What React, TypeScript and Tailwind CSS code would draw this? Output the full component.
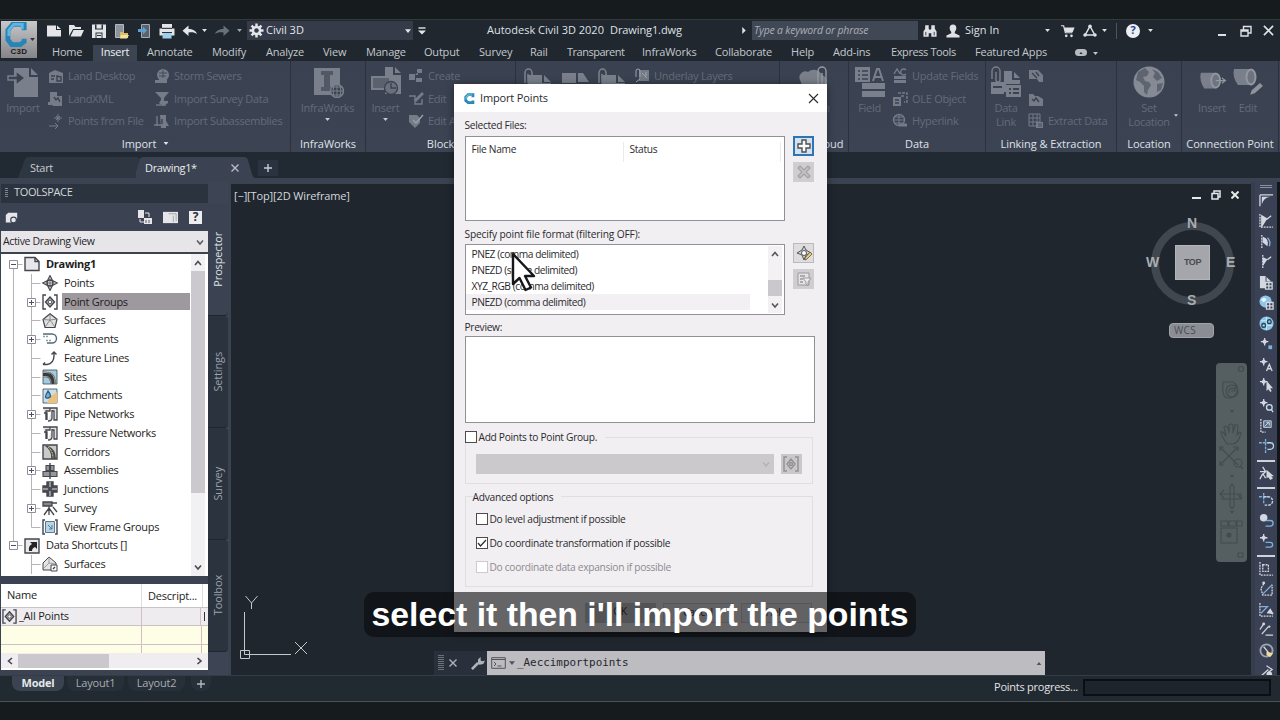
import React from 'react';
import type { ReactNode } from 'react';

type IconProps = { className?: string; children?: ReactNode; box?: string };

function Icon({ className = '', children, box = '0 0 16 16' }: IconProps) {
  return (
    <svg viewBox={box} className={`block shrink-0 ${className}`} fill="none" stroke="currentColor" strokeWidth={1.4}>
      {children}
    </svg>
  );
}

function Caret({ className = '' }: { className?: string }) {
  return (
    <svg viewBox="0 0 8 5" className={`block shrink-0 fill-current ${className}`}>
      <path d="M0 0h8L4 5z" />
    </svg>
  );
}

/* ---------- title bar ---------- */

function QuickAccess() {
  return (
    <div className="flex h-5 items-center text-[#e3e5e8]">
      <Icon className="ml-[9px] h-4 w-4">
        <path d="M1 2.500h9v4.500h5v6.500H1zM11 2.500l4 3.500h-4z" fill="currentColor" stroke="none" />
      </Icon>
      <Icon className="ml-1.5 h-4 w-4">
        <path d="M1 13V2h5l1.500 2H13v2H5z" fill="currentColor" stroke="none" />
        <path d="M5.500 7H16l-3 6.500H2.500z" fill="currentColor" stroke="none" />
      </Icon>
      <Icon className="ml-[7px] h-4 w-4">
        <path d="M1 1.500h14v13.500H1z" fill="currentColor" stroke="none" />
        <path d="M4 1.500h8v5H4zM4.500 9.500h7v5.500h-7z" fill="#2a313a" stroke="none" />
        <path d="M5.500 1.500h5v4h-5zM5.500 10.500h5v4.500h-5z" fill="currentColor" stroke="none" />
        <path d="M6 12.500h4" stroke="#2a313a" strokeWidth="1" />
      </Icon>
      <Icon className="ml-1.5 h-4 w-4">
        <path d="M2.500 1.500h8v13h-8z" fill="#8d939b" stroke="#b5b9be" strokeWidth="1" />
        <path d="M7 9h3l1 1h4v5H7z" fill="#d9bd62" stroke="none" />
        <path d="M8 12h8l-2 3.500H7z" fill="#f4e3a0" stroke="none" />
      </Icon>
      <Icon className="ml-2 h-4 w-4">
        <path d="M4.500 1.500h8v13h-8z" fill="#5a626d" stroke="#a6abb2" strokeWidth="1" />
        <path d="M1 6h5V3.500L10 7.500 6 11.500V9H1z" fill="#5d9fd0" stroke="none" />
      </Icon>
      <Icon className="ml-1.5 h-4 w-4">
        <path d="M3 1h10v4H3zM0.500 5.500h15v7h-15z" fill="currentColor" stroke="none" />
        <path d="M3 5.300h10M3 9.500h10" stroke="#2a313a" strokeWidth="1" />
        <path d="M3.500 10h9v5.500h-9z" fill="#9ed0ee" stroke="none" />
      </Icon>
      <Icon className="ml-[7px] h-4 w-4">
        <path d="M6.500 2.500v3.500c4 0 7.500 1.500 8.500 5-2.500-1.800-5-2-8.500-1.500V13L0.500 7.700z" fill="currentColor" stroke="none" />
      </Icon>
      <Caret className="ml-1 h-[3px] w-[5px]" />
      <Icon className="ml-[7px] h-4 w-4 text-[#68707b]">
        <path d="M9.500 2.500v3.500C5.500 6 2 7.500 1 11c2.500-1.800 5-2 8.500-1.500V13l6-5.300z" fill="currentColor" stroke="none" />
      </Icon>
      <Caret className="ml-[7px] h-[3px] w-[5px] text-[#a0a5ad]" />
      <div className="ml-[5px] flex h-[19px] w-[166px] items-center bg-[#353b49] pl-0.5">
        <Icon className="h-[15px] w-[15px]">
          <path
            d="M8 .5v15M.5 8h15M2.700 2.700l10.600 10.600M13.300 2.700L2.700 13.300"
            strokeWidth="2.600"
          />
          <circle cx="8" cy="8" r="5.200" fill="currentColor" stroke="none" />
          <circle cx="8" cy="8" r="2.400" fill="#353b49" stroke="none" />
        </Icon>
        <span className="ml-0.5 text-[11px]">Civil 3D</span>
        <Caret className="mr-[2px] ml-auto h-1 w-1.5" />
      </div>
      <Icon className="ml-[5px] h-2 w-2" box="0 0 8 8">
        <path d="M0.500 1h7" />
        <path d="M0 3.500h8L4 7.500z" fill="currentColor" stroke="none" />
      </Icon>
    </div>
  );
}

function TitleBar() {
  return (
    <div className="flex h-[21px] items-center text-[#dfe1e5]">
      <div className="w-[450px]">
        <QuickAccess />
      </div>
      <span className="w-[123px] text-[11px] whitespace-nowrap">Autodesk Civil 3D 2020</span>
      <span className="w-[132px] text-[11px] tracking-[-0.100px] whitespace-nowrap">Drawing1.dwg</span>
      <svg viewBox="0 0 4 8" className="h-[7px] w-1 fill-current">
        <path d="M0 0l4 4-4 4z" />
      </svg>
      <div className="ml-1.5 flex h-[19px] w-[166px] items-center bg-[#414855] pl-0.5 text-[10.500px] tracking-[-0.200px] text-[#a9adb5] italic">
        Type a keyword or phrase
      </div>
      <Icon className="ml-[5px] h-[14px] w-[14px]">
        <path d="M2.500 1.500h4v4l1 1h1l1-1v-4h4v4l2 3v6h-6v-4h-3v4H.5v-6l2-3z" fill="currentColor" stroke="none" />
        <path d="M3.200 9v4M12.800 9v4" stroke="#2a313a" strokeWidth="1" />
      </Icon>
      <Icon className="ml-[9px] h-[14px] w-[14px]">
        <path d="M8 .5c2.500 0 3.800 1.500 3.800 4C11.800 7 10.500 8 10 9v1.500l5.500 2.500v2.500H.5V13L6 10.500V9C5.500 8 4.200 7 4.200 4.500c0-2.500 1.300-4 3.800-4z" fill="currentColor" stroke="none" />
      </Icon>
      <span className="ml-[5px] w-[80px] text-[11px]">Sign In</span>
      <Caret className="h-[3px] w-[5px]" />
      <Icon className="ml-[11px] h-[14px] w-[14px]">
        <path d="M0 2h3l2 8h8" />
        <path d="M4 4h11.500l-2 5H5z" fill="currentColor" stroke="none" />
        <circle cx="6" cy="13.500" r="1.500" fill="currentColor" stroke="none" />
        <circle cx="12" cy="13.500" r="1.500" fill="currentColor" stroke="none" />
      </Icon>
      <Icon className="ml-[8px] h-[14px] w-[14px]">
        <path d="M8 2.500L2.500 12.500h11z" strokeWidth="1.700" />
        <circle cx="8" cy="2.500" r="2" fill="currentColor" stroke="none" />
        <circle cx="2.300" cy="12.500" r="2" fill="currentColor" stroke="none" />
        <circle cx="13.700" cy="12.500" r="2" fill="currentColor" stroke="none" />
      </Icon>
      <Caret className="ml-[5px] h-[3px] w-[5px]" />
      <div className="ml-[9px] h-4 w-px bg-[#4d545f]" />
      <div className="ml-[9px] flex h-[14px] w-[14px] items-center justify-center rounded-full bg-[#eceef3] text-[11px] font-bold text-[#27408b]">
        ?
      </div>
      <Caret className="ml-2 h-[3px] w-[5px]" />
      <div className="mt-[9px] ml-[65px] h-[2px] w-[8px] bg-current" />
      <Icon className="ml-[14px] h-3 w-3" box="0 0 12 12">
        <path d="M1 5h7v6H1zM1 6h7M3.500 5V1.500H11V8H8" />
      </Icon>
      <Icon className="ml-[11px] h-[11px] w-[11px]" box="0 0 12 12">
        <path d="M1 1l10 10M11 1L1 11" strokeWidth="1.800" />
      </Icon>
    </div>
  );
}

const ribbonTabs: [string, string][] = [
  ['Home', 'w-[41px]'],
  ['Insert', 'w-[54px]'],
  ['Annotate', 'w-[65px]'],
  ['Modify', 'w-[54px]'],
  ['Analyze', 'w-[57px]'],
  ['View', 'w-[43px]'],
  ['Manage', 'w-[58px]'],
  ['Output', 'w-[55px]'],
  ['Survey', 'w-[51px]'],
  ['Rail', 'w-[37px]'],
  ['Transparent', 'w-[75px] tracking-[-0.500px]'],
  ['InfraWorks', 'w-[73px]'],
  ['Collaborate', 'w-[76px]'],
  ['Help', 'w-[42px]'],
  ['Add-ins', 'w-[58px]'],
  ['Express Tools', 'w-[84px] tracking-[-0.400px]'],
  ['Featured Apps', 'w-[100px]'],
];

function RibbonTabs() {
  return (
    <div className="flex h-[21px] pl-[15px] text-[11px] tracking-[-0.200px] whitespace-nowrap text-[#c3c7cd]">
      {ribbonTabs.map(([label, width]) =>
        label === 'Insert' ? (
          <div key={label} className={`flex items-center ${width}`}>
            <span className="mt-[4px] flex h-[17px] w-[44px] items-center justify-center bg-[#3c4452] pb-[2px] text-[#eef0f3]">
              Insert
            </span>
          </div>
        ) : (
          <span key={label} className={`flex items-center pt-0.5 ${width}`}>
            {label}
          </span>
        ),
      )}
      <span className="mt-[8px] flex h-[7px] w-[12px] items-center justify-center rounded-sm bg-[#b7bac0]">
        <Caret className="h-[2px] w-1 rotate-180 text-[#252c35]" />
      </span>
      <Caret className="mt-[11px] ml-[6px] h-[3px] w-[5px]" />
    </div>
  );
}

function AppButton() {
  return (
    <div className="mt-px ml-px flex h-[37px] w-[36px] shrink-0 flex-col items-center bg-gradient-to-b from-[#c9c8cb] to-[#858488]">
      <div className="flex w-full items-center justify-between">
        <svg viewBox="0 0 24 26" className="ml-[4px] h-[26px] w-[23px]" fill="none">
          <path d="M20 9V3H8L3 9v10l4 5h9l4-3v-3" stroke="#2585b8" strokeWidth="5" />
          <path d="M18 8V3H9L4 9v6" stroke="#62b5dc" strokeWidth="3" />
        </svg>
        <Caret className="mt-2.5 mr-[2px] h-[3px] w-[5px] text-[#333]" />
      </div>
      <span className="font-['Liberation_Sans',sans-serif] text-[8px] leading-[9px] font-bold tracking-[0.300px] text-[#191919]">C3D</span>
    </div>
  );
}

/* ---------- ribbon ---------- */

function Panel({ width, title, children, arrow }: { width: string; title: string; children?: ReactNode; arrow?: boolean }) {
  return (
    <section className={`flex h-full shrink-0 flex-col border-r border-[#2b323e] ${width}`}>
      <div className="flex h-[74px] pt-1 text-[#646b78]">{children}</div>
      <div className="flex items-center justify-center gap-[7px] text-[11px] leading-[17px] tracking-[-0.050px] whitespace-nowrap text-[#dfe2e7]">
        {title}
        {arrow && <Caret className="h-[3px] w-1.5" />}
      </div>
    </section>
  );
}

function Small({ icon, label }: { icon: ReactNode; label: string }) {
  return (
    <div className="flex h-[22.500px] items-center gap-1 text-[11px] tracking-[-0.280px] whitespace-nowrap">
      <Icon className="h-4 w-4 text-[#757b87]">{icon}</Icon>
      {label}
    </div>
  );
}

function Large({ icon, label, width, caret }: { icon: ReactNode; label: string; width: string; caret?: boolean }) {
  return (
    <div className={`flex flex-col items-center text-center text-[11px] leading-[14px] tracking-[-0.280px] ${width}`}>
      <Icon box="0 0 32 32" className="mt-[1px] h-[32px] w-[32px] text-[#7a808b]">
        {icon}
      </Icon>
      <span className="mt-[3px] whitespace-pre-line">{label}</span>
      {caret && <Caret className="mt-[3px] h-[3px] w-[5px] text-[#c6c9cf]" />}
    </div>
  );
}

const solid = { fill: 'currentColor', stroke: 'none' };
const ground = '#3b4251';

function Clip() {
  return <path d="M3 16V6a3.500 4 0 0 1 7 0v9a2 2 0 0 1-4 0V7" strokeWidth="1.600" />;
}

function Ribbon() {
  return (
    <div className="flex h-[91px] bg-gradient-to-b from-[#3a4150] to-[#3c4454] pl-px">
      <Panel width="w-[290px]" title="Import" arrow>
        <Large
          width="w-[44px]"
          label="Import"
          icon={
            <>
              <path d="M7 2h15v9h9v20H7zM24 2l7 7h-7z" {...solid} />
              <path d="M1 10h8V5l9 7-9 7v-5H1z" fill={ground} />
            </>
          }
        />
        <div className="ml-[3px] w-[106px]">
          <Small label="Land Desktop" icon={<><path d="M1 5l6-3 8 3v10H1z" {...solid} /><path d="M3 8h4M3 11h3M9 8v5h4V9z" stroke={ground} /></>} />
          <Small label="LandXML" icon={<><path d="M2 1h7v4h5v10H5l-3-4zM0 11h7v3H0z" {...solid} /><path d="M6 6l2 3 2-2 2 4" stroke={ground} /></>} />
          <Small label="Points from File" icon={<path d="M10 1v8M6 5h8M1 13h9M7 10l3 3-3 3M8 3l4 4M12 3L8 7" strokeWidth="1" />} />
        </div>
        <div>
          <Small label="Storm Sewers" icon={<><circle cx="9" cy="7" r="6" {...solid} /><path d="M1 12h12v3H1z" {...solid} /><path d="M5 5h8M5 8h7M9 2v8" stroke={ground} strokeWidth=".8" /></>} />
          <Small label="Import Survey Data" icon={<><path d="M1 1h14l-5 6v3h4v2l-5 3-4-3 2-3V7z" {...solid} /><path d="M2 14h10" /></>} />
          <Small label="Import Subassemblies" icon={<><path d="M6 2h6v13H7zM12 8l3 5h-3z" {...solid} /><path d="M0 12h10M3 3v10" /><path d="M8 6v5" stroke={ground} /></>} />
        </div>
      </Panel>
      <Panel width="w-[75px]" title="InfraWorks">
        <Large
          width="w-[73px]"
          label="InfraWorks"
          caret
          icon={
            <>
              <path d="M2 2h26v27H2z" {...solid} />
              <path d="M9 5h12v4h-3v12h3v4H9v-4h3V9H9z" fill="#525966" stroke="none" />
              <circle cx="25" cy="25" r="6.500" fill={ground} />
              <path d="M18.500 25h13M25 18.500v13M20 21h10M20 29h10M22 20q-2 5 0 10M28 20q2 5 0 10" strokeWidth="1" />
            </>
          }
        />
      </Panel>
      <Panel width="w-[150px]" title="Block">
        <Large
          width="w-[39px]"
          label="Insert"
          caret
          icon={<><path d="M15 1h8v8h8v19H15z" {...solid} /><path d="M25 1l6 6h-6zM1 10h20v14H1z" {...solid} /><path d="M3 12h16v10H3z" fill="#5b626e" stroke="none" /><circle cx="21" cy="22" r="6.500" fill="#6a717d" stroke={ground} /><path d="M21 17v5h5" stroke={ground} /></>}
        />
        <div className="ml-[3px]">
          <Small label="Create" icon={<path d="M1 6h6v6H1zM9 1h5v4H9zM8 10h6v4H8zM7 7h3V4" {...solid} />} />
          <Small label="Edit" icon={<><path d="M1 5h6v8h7V8" /><path d="M6 9l8-8 2 2-8 8z" {...solid} /></>} />
          <Small label="Edit Attributes" icon={<><path d="M1 2h8l3 3v5l-5 5-6-6z" {...solid} /><path d="M5 7l3 3 7-8" stroke="#9b9fa8" /></>} />
        </div>
      </Panel>
      <Panel width="w-[264px]" title="Reference">
        <div className="flex pt-0.5 pl-[6px] text-[#7a808b]">
          <Icon box="0 0 32 32" className="h-8 w-8"><path d="M6 8h14v8h9v14H6zM22 8l7 7h-7z" {...solid} /><Clip /></Icon>
          <Icon box="0 0 32 32" className="ml-[7px] h-8 w-8"><path d="M1 6h14v10H1zM17 6h5l6 9h-11zM1 18h28v12H1z" {...solid} /></Icon>
          <Icon box="0 0 32 32" className="ml-[3px] h-8 w-8"><path d="M6 8h14v8h9v14H6zM22 8l7 7h-7z" {...solid} /><Clip /></Icon>
        </div>
        <div className="ml-[6px]">
          <Small label="Underlay Layers" icon={<><path d="M5 2h10v11H5z" {...solid} /><path d="M2 9V3a2 2 0 0 1 4 0v6M2 14l4-3M8 5l5 5M12 4v4" stroke="#a0a4ac" strokeWidth="1" /></>} />
        </div>
      </Panel>
      <Panel width="w-[69px]" title="Point Cloud">
        <Large
          width="w-[68px]"
          label="Attach"
          icon={<><path d="M2 14a6 6 0 0 1 8-8 9 9 0 0 1 14 3 7 7 0 0 1 4 10H4z" {...solid} /><path d="M20 20V5a4 4 0 0 1 8 0v13a2 2 0 0 1-4 0V7" stroke="#979ba4" /></>}
        />
      </Panel>
      <Panel width="w-[137px]" title="Data">
        <Large
          width="w-[41px]"
          label="Field"
          icon={<><path d="M1 1h15v15H1zM8 17h23v6H8zM8 25h23v6H8z" {...solid} /><path d="M4 5h2M8 5h6M4 9h2M8 9h6M4 13h2M8 13h6" stroke={ground} /><path d="M19 15l4-12h2l4 12M21 11h7" strokeWidth="2" /></>}
        />
        <div className="ml-[2px]">
          <Small label="Update Fields" icon={<><path d="M2 8h12v3H2zM2 12h12v3H2z" {...solid} /><path d="M2 6l3-5 3 5M14 2a3 3 0 1 0 0 4" /></>} />
          <Small label="OLE Object" icon={<><path d="M6 2h9v9h-3M12 5H9" strokeDasharray="3 1" /><path d="M1 6h8v9H1z" {...solid} /><path d="M3 9h4M3 12h4" stroke={ground} /></>} />
          <Small label="Hyperlink" icon={<><circle cx="7" cy="7" r="5.500" /><path d="M1.500 7h11M7 1v12M3 4h8M3 10h8" strokeWidth="1" /><path d="M7 12h8" strokeWidth="3" /></>} />
        </div>
      </Panel>
      <Panel width="w-[131px]" title="Linking & Extraction">
        <Large
          width="w-[40px]"
          label={'Data\nLink'}
          icon={<><path d="M1 16h13v12H1zM14 5h8v9h8v4H16v8h-2zM24 6l6 6h-6zM16 19h15v12H16z" {...solid} /><path d="M19 23h2M23 23h6M19 27h2M23 27h6M3 21h9" stroke={ground} strokeWidth="2" /><path d="M2 13V5a4 4 0 0 1 8 0v9a2 2 0 0 1-4 0V6" /></>}
        />
        <div className="ml-[2px]">
          <Small label="" icon={<><path d="M1 2h9l5 5v7h-4l-2-3H1z" {...solid} /><path d="M4 5l5 5M8 4l3 4" stroke={ground} /></>} />
          <Small label="" icon={<><path d="M1 3h4l2 2h3l5 3v7H1z" {...solid} /><path d="M4 8l2 2 2-3 3 4" stroke={ground} /></>} />
          <Small label="Extract  Data" icon={<><path d="M1 1h11v12H1zM1 5h11M1 9h11M5 1v12M9 1v12" strokeWidth="1" /><path d="M8 9h7v6H8z" {...solid} /><path d="M10 11h4M10 13h4" stroke={ground} strokeWidth=".8" /></>} />
        </div>
      </Panel>
      <Panel width="w-[65px]" title="Location">
        <Large
          width="w-[64px]"
          label={'Set\nLocation'}
          icon={<><circle cx="16" cy="16" r="15.500" fill="#858a94" stroke="none" /><path d="M5 6l7-4 4 4-2 4-4 1 2 4 4 1 2 3-3 5-1 5-3-3v-6l-4-4-4-2zM19 3l6 3 4 6-5 3-4-4 2-4zM24 18l6-1-2 7-4 2z" fill="#5e6571" stroke="none" /></>}
        />
        <Caret className="mt-[49px] ml-[-7px] h-[3px] w-1 text-[#c6c9cf]" />
      </Panel>
      <Panel width="w-[97px]" title="Connection Point">
        <div className="w-[30px] pl-[13px]">
          <Large width="w-[34px]" label="Insert" icon={<g transform="translate(3 4) scale(.88)"><path d="M2 3h18v18H6q-6-9-4-18z" {...solid} /><ellipse cx="19" cy="12" rx="5" ry="8" fill="#6d737f" stroke="#9297a0" strokeWidth="2" /><path d="M19 12h11M26 9l4 3-4 3" stroke="#9297a0" /></g>} />
        </div>
        <div className="w-[40px] pl-[19px]">
          <Large width="w-[34px]" label="Edit" icon={<><path d="M2 3h18v16H6q-6-8-4-16z" {...solid} /><ellipse cx="19" cy="11" rx="4.500" ry="7.500" fill="#6d737f" stroke="#9297a0" strokeWidth="2" /><path d="M17 30l2-6 9-8 4 4-9 8z" fill="#8d929b" stroke={ground} /></>} />
        </div>
      </Panel>
    </div>
  );
}

function FileTabs() {
  return (
    <div className="flex h-[26px] items-end bg-[#212932] pl-[18px] text-[11px] text-[#c8cbd1]">
      <div className="relative flex h-[21px] w-[118px] items-center">
        <svg viewBox="0 0 122 21" className="absolute inset-0 h-[21px] w-[122px] fill-[#2e3642]"><path d="M0 21L7 2q1-2 3-2h108q3 0 4 2v19z" /></svg>
        <span className="relative ml-3 pt-px tracking-[-0.300px]">Start</span>
      </div>
      <div className="relative flex h-[21px] w-[120px] items-center text-[#e8eaed]">
        <svg viewBox="0 0 120 21" className="absolute inset-0 h-[21px] w-[120px] fill-[#3b4251]"><path d="M-2 21L4 2q1-2 3-2h101q3 0 4 3l4 14q1 4 4 4z" /></svg>
        <span className="relative ml-[9px] pt-px tracking-[-0.350px]">Drawing1*</span>
        <Icon className="relative ml-[34px] h-2 w-2 text-[#b9bcc4]" box="0 0 8 8"><path d="M.5.5l7 7M7.500.5l-7 7" /></Icon>
      </div>
      <div className="mb-[2px] ml-[2px] flex h-4 w-[20px] items-center justify-center bg-[#2b3340]">
        <Icon className="h-2 w-2" box="0 0 8 8"><path d="M4 0v8M0 4h8" /></Icon>
      </div>
    </div>
  );
}

/* ---------- toolspace ---------- */

const ink = '#44464d';
const treeIcons: Record<string, ReactNode> = {
  drawing: <path d="M1 1.500h10l4 4v9H1zM11 1.500v4h4" fill="#e9e7ea" stroke={ink} />,
  points: <><path d="M8 .5l2.500 5L15.500 8l-5 2.500L8 15.500l-2.500-5L.5 8l5-2.500z" fill="#c4c4c8" stroke={ink} strokeWidth="1.100" /><circle cx="8" cy="8" r="3" fill="#f5f5f5" stroke={ink} /><path d="M5 8h6M8 5v6" stroke={ink} strokeWidth=".8" /></>,
  groups: <><path d="M4 1H1v14h3M12 1h3v14h-3" stroke={ink} /><path d="M8 3l4.500 5L8 13 3.500 8z" fill="#bbb" stroke={ink} /><circle cx="8" cy="8" r="1.800" fill="#fff" stroke={ink} strokeWidth=".9" /></>,
  surfaces: <><path d="M8 .8l7 5.500-2 8.200H3L1 6.500z" fill="#dfe1e0" stroke={ink} strokeWidth="1.200" /><path d="M8 1v6l7-1M8 7l5 7M8 7l-5 7M8 7L1 6.500" stroke="#777" strokeWidth=".8" /></>,
  alignments: <><path d="M1 3h7M5 12h5a4 4 0 0 0 0-9H7" stroke="#536a78" /><path d="M1 5.500h6M4 9.500h5" stroke="#8aa49f" strokeDasharray="2 1" /></>,
  feature: <path d="M1 14.500h4q7-1 7-9V3M9.500 4.500L12 2l2.500 2.500M3 12.500l-2 2" stroke={ink} />,
  sites: <><path d="M1 1h14v14H1z" fill="#9fcbe4" stroke={ink} strokeWidth=".8" /><path d="M1 5.500h3q7 0 7 9.500" stroke="#3a3b40" strokeWidth="5.500" /><path d="M1 3.500h4q8 0 8 11.500M1 7.500h3q5 0 5 7.500" stroke="#b9b69c" strokeWidth=".8" /></>,
  catchments: <><path d="M1 1h14v14H1z" fill="#c4e2ee" stroke={ink} strokeWidth=".8" /><path d="M9 8l6-4v11H5z" fill="#edc17a" stroke="none" /><path d="M6 3q5 6 0 7t0-7z" fill="#79acd5" stroke="#335f86" /></>,
  pipes: <path d="M1 2h7v3H4v9M2 7h3v7M10 4v8q0 3-4 3M8 2h7v12h-3V5h-2" stroke={ink} strokeWidth="1.300" fill="#e1e1e3" />,
  corridors: <><path d="M1 1h14v14H1z" fill="#cacaca" stroke={ink} /><path d="M3 2q7 4 6 13h5Q14 5 6 2z" fill="#4b4c4e" stroke="none" /><path d="M6 3q5 4 5 11" stroke="#e4d785" strokeDasharray="2 1" strokeWidth="1" /></>,
  assemblies: <><path d="M4 2.500h3.500v5H4zM8.500 2.500H12v5H8.500zM1 8.500h14v5H1z" fill="#95979b" stroke={ink} strokeWidth="1.100" /><path d="M8 0v16" stroke={ink} /></>,
  junctions: <><path d="M5 1h6v4h4v6h-4v4H5v-4H1V5h4z" fill="#4b4d52" stroke={ink} /><path d="M8 1v5M8 10v5M1 8h5M10 8h5" stroke="#ddd" strokeWidth="1" /></>,
  survey: <><path d="M1 2h9v4H1zM10 3h5M7 6v3M7 8l-5 7M7 8v7M7 8l5 7M11 7l4 5" fill="#888" stroke={ink} strokeWidth="1.300" /></>,
  frames: <><path d="M3 1H1v14h2M13 1h2v14h-2" stroke={ink} /><path d="M3.500 2.500h9v11h-9z" fill="#b7d5e9" stroke="#4c6d84" strokeWidth=".9" /><path d="M6 6l4 4M10 6v4H7" stroke="#4c6d84" strokeWidth=".9" /></>,
  shortcuts: <><path d="M1 1h14v14H1z" fill="#ebebeb" stroke={ink} /><path d="M5 13q-1-5 3-7L6 4h7v7l-2-2q-3 1-3 4z" fill="#232427" stroke="none" /></>,
  shortcutSurface: <><path d="M1 14V7l6-6 7 6v7z" fill="#e5e5e3" stroke={ink} strokeWidth="1" /><path d="M7 1v6l7 1M7 7l-6 6" stroke="#888" strokeWidth=".8" /><path d="M9 9h6v6H9z" fill="#fff" stroke={ink} strokeWidth="1" /><path d="M11 13l2-2" stroke={ink} /></>,
};

type Row = { label: string; icon: string; root?: boolean; open?: 'plus' | 'minus'; last?: boolean; bold?: boolean; selected?: boolean };
const rows: Row[] = [
  { label: 'Drawing1', icon: 'drawing', root: true, open: 'minus', bold: true },
  { label: 'Points', icon: 'points' },
  { label: 'Point Groups', icon: 'groups', open: 'plus', selected: true },
  { label: 'Surfaces', icon: 'surfaces' },
  { label: 'Alignments', icon: 'alignments', open: 'plus' },
  { label: 'Feature Lines', icon: 'feature' },
  { label: 'Sites', icon: 'sites' },
  { label: 'Catchments', icon: 'catchments' },
  { label: 'Pipe Networks', icon: 'pipes', open: 'plus' },
  { label: 'Pressure Networks', icon: 'pipes' },
  { label: 'Corridors', icon: 'corridors' },
  { label: 'Assemblies', icon: 'assemblies', open: 'plus' },
  { label: 'Junctions', icon: 'junctions' },
  { label: 'Survey', icon: 'survey', open: 'plus' },
  { label: 'View Frame Groups', icon: 'frames', last: true },
  { label: 'Data Shortcuts []', icon: 'shortcuts', root: true, open: 'minus', last: true },
  { label: 'Surfaces', icon: 'shortcutSurface' },
];

function TreeRow({ row, index }: { row: Row; index: number }) {
  const x = row.root ? 12.5 : 30.5;
  const inShortcuts = index > 15;
  return (
    <div className="flex h-[18.750px] items-center">
      <svg width={row.root ? 23 : 41} height="18.75" className="block shrink-0" fill="none" stroke="#b7b4b9">
        {!inShortcuts && <path d={`M12.500 ${index === 0 ? 9 : 0}V${row.root && row.last ? 9 : 19}`} />}
        {!row.root && <path d={`M30.500 0V${row.last ? 9.5 : 19}`} />}
        <path d={`M${x} 9.500h9`} />
        {row.open && (
          <>
            <path d={`M${x - 4} 5.500h8v8h-8z`} fill="#fff" stroke="#8f8d95" />
            <path d={row.open === 'plus' ? `M${x - 2.5} 9.500h5M${x} 7v5` : `M${x - 2.5} 9.500h5`} stroke="#4d4f66" />
          </>
        )}
      </svg>
      <Icon className="h-4 w-4">{treeIcons[row.icon]}</Icon>
      <span
        className={`ml-1 flex h-[17px] items-center pl-0.5 text-[11px] whitespace-nowrap ${
          row.bold ? 'font-bold tracking-[-0.300px]' : 'tracking-[-0.300px]'
        } ${row.selected ? 'w-[128px] bg-[#9d999e]' : ''}`}
      >
        {row.label}
      </span>
    </div>
  );
}

function Chevron({ dir, className = '' }: { dir: 'up' | 'down' | 'left' | 'right'; className?: string }) {
  const d = { up: 'M1 6l3-3.500L7 6', down: 'M1 2.500L4 6l3-3.500', left: 'M6 1L2.500 4 6 7', right: 'M2.500 1L6 4 2.500 7' }[dir];
  return (
    <Icon box="0 0 8 8" className={`h-2 w-2 ${className}`}>
      <path d={d} strokeWidth="1.600" />
    </Icon>
  );
}

function Toolspace() {
  return (
    <aside className="flex h-full w-[207px] shrink-0 flex-col">
      <div className="mt-px flex h-[19px] items-center bg-[#2b333e] pb-[2px] pl-1 text-[11px] text-[#d3d6db]">
        <div className="flex w-[3px] flex-col gap-px">
          {[0, 1, 2, 3, 4].map((i) => (
            <div key={i} className="h-px bg-[#7f858f]" />
          ))}
        </div>
        <span className="ml-1.5 tracking-[-0.350px]">TOOLSPACE</span>
      </div>
      <div className="flex h-[28px] items-center bg-[#3b4252] pl-1 text-[#e6e6ea]">
        <Icon className="h-[13px] w-[13px]">
          <path d="M1 5l3-3h11v7l-6 5H1z" {...solid} />
          <circle cx="10.500" cy="11" r="3.500" fill="#e6e6ea" stroke="#3b4252" />
        </Icon>
        <Icon className="ml-[119px] h-[16px] w-[16px]">
          <path d="M1 1h6v8H1zM7 9h8v6H7z" {...solid} />
          <path d="M8 4h4v4M3 10v3h4" strokeWidth="1" />
          <path d="M9 11v3M12 11v3" stroke="#3b4252" strokeWidth=".8" />
        </Icon>
        <Icon className="ml-[10px] h-[15px] w-[15px]">
          <path d="M0 2h16v12H0z" {...solid} />
          <path d="M6 4h8v8M11 6v7" stroke="#a4a4ac" strokeWidth="1" />
        </Icon>
        <div className="ml-[11px] flex h-[13px] w-[13px] items-center justify-center bg-[#ededf0] text-[12px] font-bold text-[#2a303b]">?</div>
      </div>
      <div className="flex h-[21px] items-center justify-between bg-[#e7e5e8] pr-1 pl-0.5 text-[10.500px] tracking-[-0.350px] text-[#26262a]">
        Active Drawing View
        <Chevron dir="down" className="text-[#5c5c62]" />
      </div>
      <div className="mt-[2px] flex h-[322px] bg-white">
        <div className="w-[190px] overflow-hidden pt-px text-[#1d1d21]">
          {rows.map((row, i) => (
            <TreeRow key={i} row={row} index={i} />
          ))}
        </div>
        <div className="flex w-[14px] flex-col items-center bg-[#f1f0f3] text-[#4b4b52]">
          <div className="flex h-[17px] items-center">
            <Chevron dir="up" />
          </div>
          <div className="h-[222px] w-full bg-[#cbc9cd]" />
          <div className="mt-auto flex h-[18px] items-center">
            <Chevron dir="down" />
          </div>
        </div>
      </div>
      <div className="mt-2 flex h-[86px] flex-col bg-white text-[11px] tracking-[-0.200px] text-[#1d1d21]">
        <div className="flex h-[23px] items-center">
          <span className="w-[140px] pl-1.5">Name</span>
          <span className="h-full w-[61px] border-l border-[#dedde0] pl-1.5 leading-[23px]">Descript...</span>
          <span className="h-full border-l border-[#dedde0]" />
        </div>
        <div className="flex h-[19px] items-center border-y border-[#c8c3c8] bg-[#efecf0]">
          <Icon className="ml-px h-[15px] w-[15px]">{treeIcons.groups}</Icon>
          <span className="ml-[2px] w-[122px]">_All Points</span>
          <span className="h-full w-[60px] border-x border-[#d9bcbf]" />
          <span className="ml-[3px] h-[9px] w-px bg-[#333]" />
        </div>
        <div className="flex h-[19px] border-b border-[#c8c3c8] bg-[#fefee6]">
          <span className="ml-[140px] w-[61px] border-x border-[#d9bcbf]" />
        </div>
        <div className="flex h-[8px] bg-[#fefee6]">
          <span className="ml-[140px] w-[61px] border-x border-[#d9bcbf]" />
        </div>
        <div className="flex h-[15px] items-center bg-[#efedf0] pr-[5px] pl-[5px] text-[#45454b]">
          <Chevron dir="left" />
          <div className="ml-1 h-[14px] w-[91px] bg-[#cac8cc]" />
          <Chevron dir="right" className="ml-auto" />
        </div>
      </div>
    </aside>
  );
}

function PaletteTabs() {
  const tabs = ['Prospector', 'Settings', 'Survey', 'Toolbox'];
  return (
    <div className="flex w-[23px] shrink-0 border-r-[3px] border-[#3b4350] bg-[#3d4454]">
      <div className="flex w-[20px] flex-col pt-[22px]">
        {tabs.map((tab, i) => (
          <div
            key={tab}
            className={`flex h-[112px] items-center justify-center rounded-r border-b border-[#1f2630] text-[11px] tracking-[-0.150px] ${
              i === 0 ? 'bg-[#3b4252] text-[#dfe1e6]' : 'bg-[#2b333f] text-[#9da2ac]'
            }`}
          >
            <span className="rotate-180 [writing-mode:vertical-rl]">{tab}</span>
          </div>
        ))}
      </div>
    </div>
  );
}

/* ---------- canvas ---------- */

function ViewCube() {
  const letter = 'absolute text-[14px] leading-none font-bold text-[#a9adb1]';
  return (
    <div className="absolute top-[30px] right-[13px] h-[96px] w-[92px] font-['Liberation_Sans',sans-serif]">
      <div className="absolute top-[8px] left-[5px] h-[83px] w-[83px] rounded-full border-[8px] border-[#40474f]" />
      <div className="absolute top-[31px] left-[29px] flex h-[35px] w-[35px] items-center justify-center border border-[#b3b3b9] bg-[#a5a6ac] text-[9px] font-bold tracking-[-0.400px] text-[#484b53]">
        TOP
      </div>
      <span className={`${letter} top-[2px] left-[41px]`}>N</span>
      <span className={`${letter} top-[79px] left-[41px]`}>S</span>
      <span className={`${letter} top-[41px] left-0`}>W</span>
      <span className={`${letter} top-[41px] left-[80px]`}>E</span>
    </div>
  );
}

function NavBar() {
  return (
    <div className="absolute top-[179px] right-[4px] flex h-[199px] w-[31px] flex-col items-center rounded bg-[#555e61] text-[#434b4d]">
      <svg viewBox="0 0 31 199" className="h-[199px] w-[31px]" fill="none" stroke="currentColor" strokeWidth="1.100">
        <circle cx="25" cy="6" r="2.500" />
        <path d="M7 19h10a8 8 0 1 1-8 15q-3-3-2-15z" />
        <circle cx="16" cy="28" r="6" />
        <path d="M13 30a3 3 0 0 1 6-3M19 24v4h-4" />
        <path d="M14 47h4l-2 3zM14 112h4l-2 3zM14 148h4l-2 3z" fill="currentColor" stroke="none" />
        <path d="M9 78q-5-8-4-9 2-1 5 4l-2-9q2-2 4 1l1 5V62q2-2 4 0v8l2-8q3-1 3 2l-1 8 3-3q2 1 0 4-2 7-7 8h-6z" />
        <path d="M4 84l18 18M4 102l17-17M4 88v-4h4M4 98v4h4M17 84h5v4" />
        <circle cx="22" cy="100" r="4" />
        <path d="M24 103l3 3" />
        <path d="M14 124l2-3 2 3v19l-2 3-2-3zM5 131h20v5H5M8 127l-4 4 4 4M22 132l4 4" />
        <path d="M5 158h7v5H5zM13 158h7v5h-7zM21 158h5v5h-5zM5 165h16v15H5z" />
        <circle cx="13" cy="172" r="2" fill="currentColor" />
        <path d="M22 190h5v4h-5z" />
      </svg>
    </div>
  );
}

function Canvas() {
  return (
    <div className="relative h-full w-[1020px] shrink-0 border-t-2 border-[#3b4350] bg-[#1f262e]">
      <div className="flex items-start justify-between pt-[4px] pl-[3px]">
        <span className="text-[11px] leading-[15px] tracking-[-0.130px] text-[#d5d8dc]">[−][Top][2D Wireframe]</span>
        <div className="flex items-center gap-2.5 pt-[2px] pr-[12px] text-[#e7e9eb]">
          <div className="mt-[5px] h-[2px] w-[9px] bg-current" />
          <Icon className="h-[10px] w-[10px]" box="0 0 10 10"><path d="M1 3.500h6v5.500H1zM3 3V1h6v6H7" strokeWidth="1.500" /></Icon>
          <Icon className="h-2 w-2" box="0 0 8 8"><path d="M.5.5l7 7M7.500.5l-7 7" strokeWidth="2" /></Icon>
        </div>
      </div>
      <ViewCube />
      <div className="absolute top-[139px] right-[37px] h-[15px] w-[45px] rounded border border-[#a2a3a9] bg-[#8b8d95] pl-1 text-[10px] leading-[13px] tracking-[0.300px] text-[#4a4d55]">WCS</div>
      <NavBar />
      <svg viewBox="0 0 80 80" className="absolute bottom-[7px] left-[6px] h-20 w-20" fill="none" stroke="#c5c8cb">
        <path d="M7.500 24v42.500H54M3.500 62.500h9v8h-9zM8.500 8l6 7 6-7M14.500 15v6M58 54l12 12M70 54L58 66" />
      </svg>
      <div className="absolute bottom-0 left-[203px] flex h-[24px] w-[611px]">
        <div className="flex w-[53px] items-center bg-[#29303b] pl-1 text-[#b0b3b9]">
          <Icon className="h-4 w-[6px]" box="0 0 6 16"><path d="M1 0v16M3 0v16M5 0v16" strokeWidth="1" strokeDasharray="1 1" /></Icon>
          <Icon className="ml-[5px] h-2 w-2" box="0 0 8 8"><path d="M.5.5l7 7M7.500.5l-7 7" /></Icon>
          <Icon className="ml-[14px] h-3.5 w-3.5"><path d="M1 15l7-7" strokeWidth="3" /><path d="M8 9V4l3-3v4l2 1 3-1-2 4-4 1z" {...solid} /></Icon>
        </div>
        <div className="flex flex-1 items-center bg-[#bdbcc1] pr-[3px] pl-1 text-[#54545a]">
          <Icon className="h-[12px] w-[15px]" box="0 0 15 12"><path d="M.7.7h13.600v10.600H.7zM.7 2.500h13.600M3 5l2 2-2 2M6.500 9h4" strokeWidth="1" /></Icon>
          <Caret className="ml-[3px] h-1 w-1.5" />
          <span className="ml-[2px] pt-px font-['DejaVu_Sans_Mono','Liberation_Mono',monospace] text-[10.900px] text-[#26262b]">_Aeccimportpoints</span>
          <Caret className="ml-auto h-[3px] w-1.5 rotate-180" />
        </div>
      </div>
    </div>
  );
}

const blue = '#7fb0dc';
const stripIcons: ReactNode[] = [
  <><path d="M1 2h14M1 2v12" /><path d="M3 4h9q-7 1-9 8z" {...solid} /></>,
  <><path d="M1 1v14h14" strokeDasharray="2 1" /><path d="M3 3l5 3-5 8zM8 7l5-4" fill="currentColor" /></>,
  <><path d="M3 1v14" strokeDasharray="2 1" /><path d="M4 3q7 2 5 10L4 9z" {...solid} /><path d="M9 4q4 4 2 9" stroke={blue} /></>,
  <><path d="M4 1v14" strokeDasharray="2 1" /><path d="M4 4l4 2-4 6M9 6l4-3" fill="currentColor" /></>,
  <><path d="M1 1h6v13H1zM8 2l5 5H8z" {...solid} /><path d="M7 8h7v7H7zM7 11.500h7M10.500 8v7" fill="#3a4154" /></>,
  <><circle cx="7" cy="7" r="6.500" fill="#8cc6e8" stroke="none" /><path d="M2 5q4-4 6 0l-3 3z" fill="#e8f3f8" stroke="none" /><path d="M8 8h7v7H8zM8 11.500h7M11.500 8v7" fill="#3a4154" /></>,
  <><circle cx="8" cy="8" r="7.500" fill="#8cc6e8" stroke="none" /><path d="M2 5h12M2 10h12M8 1v14" stroke="#dff0fa" strokeWidth=".8" /><circle cx="5" cy="10" r="2" stroke="#24435d" /><circle cx="11" cy="6" r="2" stroke="#24435d" /></>,
  <><path d="M6 2v8M2 6h8M6 4l2 2-2 2-2-2z" /><path d="M10 10h4v4h-4z" fill={blue} stroke="none" /></>,
  <><path d="M5 1v8M1 5h8M5 3l2 2-2 2-2-2z" /><path d="M8 15l3-7 3 7M9 12.500h4" /></>,
  <><path d="M5 1v8M1 5h8M5 3l2 2-2 2-2-2z" /><path d="M8 4v11l2-2 2 3 1.500-1-1.500-3h3z" {...solid} /></>,
  <><path d="M5 1v8M1 5h8M5 3l2 2-2 2-2-2z" /><circle cx="11" cy="10" r="3" stroke="#c9dff0" /><path d="M13 12l2 3" /></>,
  <><path d="M2 1v14h5" strokeDasharray="2 1" /><path d="M5 3h8v7H5z" fill="#596d8c" strokeWidth="1" /><path d="M6 9l5-5M8 5h3v3" strokeWidth="1" /></>,
  <><path d="M0 4h11M7 0v16" stroke={blue} strokeDasharray="3 1" /><path d="M9 4h3a3.500 3.500 0 0 1 0 7H9" stroke="#b8d4ee" /></>,
  null,
  <><path d="M4 1l3 5-4 4M1 6h7M4 8l-3 6M4 8l3 5" /><path d="M8 4v9l2-1 2 3 3-2-2-2h3z" {...solid} /></>,
  null,
  <><path d="M0 4h10M5 0v12" stroke={blue} strokeDasharray="3 1" /><path d="M5 4h5a4 4 0 0 1 0 9H6" stroke="#b8d4ee" strokeDasharray="3 1" /></>,
  <><circle cx="5" cy="5" r="4" {...solid} /><path d="M7 8h5a2.500 2.500 0 0 1 0 6H7" stroke={blue} /></>,
  <><path d="M5 0v8M1 4h8M5 2l2 2-2 2-2-2z" /><path d="M7 9h5a2.500 2.500 0 0 1 0 5H7" stroke={blue} /></>,
  null,
  <><path d="M1 1v14h14" strokeDasharray="2 1" /><path d="M4 4h6v7H4z" strokeDasharray="2 1" /></>,
  <><path d="M5 3L2 8l2 7h10V4" strokeDasharray="2 1" /><path d="M4 14L14 4" stroke={blue} /><circle cx="5" cy="2" r="1.500" {...solid} /></>,
  <><path d="M1 1v14h14" strokeDasharray="2 1" /><path d="M2 12L9 5H2" stroke={blue} /><path d="M9 12l3-4 3 5" fill="currentColor" /></>,
  <><path d="M1 8l4-6M3 13l7-8M7 14h8" /><circle cx="5" cy="2" r="1.500" {...solid} /><circle cx="11" cy="5" r="1.200" {...solid} /></>,
  <><circle cx="8" cy="8" r="6.500" strokeWidth="2" stroke="#9ea4ad" /><path d="M5 4l5 6" /><path d="M8 9l7 2-3 4-4-2z" fill="#efdca0" stroke="none" /></>,
  <><path d="M2 14l8-7M8 3l6 4-4 3" /><circle cx="11" cy="12" r="3" {...solid} /></>,
];

function ToolStrip() {
  return (
    <div className="flex h-full w-[29px] shrink-0 border-l-4 border-[#363e4b] bg-[#10161a]">
      <div className="flex h-full w-[22px] flex-col items-center overflow-hidden bg-[#3a4154] pt-[3px] text-[#d2d7e0]">
        <div className="flex w-3 flex-col gap-px">
          <div className="h-px bg-[#8a909d]" />
          <div className="h-px bg-[#8a909d]" />
        </div>
        <div className="mt-[2px] flex flex-col items-center">
          {stripIcons.map((icon, i) =>
            icon ? (
              <div key={i} className="flex h-[20.500px] items-center">
                <Icon className="h-[15px] w-[15px]">{icon}</Icon>
              </div>
            ) : (
              <div key={i} className="mt-[3px] mb-[1.500px] h-[2px] w-[18px] bg-[#ced2da]" />
            ),
          )}
        </div>
      </div>
    </div>
  );
}

function StatusBar() {
  const tab = 'relative flex h-[15px] items-center justify-center text-[11px] tracking-[-0.200px]';
  return (
    <footer className="flex h-[27px] items-start border-t border-b border-t-[#343c46] border-b-[#4a5158] bg-[#212931] pl-3">
      <span className={`${tab} w-[52px] rounded-b-lg bg-[#3a434f] font-bold text-[#e6e8ea]`}>Model</span>
      <span className={`${tab} ml-[3px] w-[57px] rounded-b-lg bg-[#272f38] text-[#a7acb3]`}>Layout1</span>
      <span className={`${tab} ml-[4px] w-[57px] rounded-b-lg bg-[#272f38] text-[#a7acb3]`}>Layout2</span>
      <span className={`${tab} ml-[6px] w-[20px] rounded-b-lg bg-[#272f38] text-[#b3b7bd]`}>
        <Icon className="h-2 w-2" box="0 0 8 8"><path d="M4 0v8M0 4h8" /></Icon>
      </span>
      <span className="mt-[3px] ml-auto text-[11px] tracking-[-0.250px] text-[#e1e3e6]">Points progress...</span>
      <div className="mt-[3px] mr-[9px] ml-[5px] h-[17px] w-[188px] border-2 border-[#0b0f13] bg-[#1c242c]" />
    </footer>
  );
}

/* ---------- dialog ---------- */

function Check({ on, off, label }: { on?: boolean; off?: boolean; label: string }) {
  return (
    <div className={`flex h-3 items-center gap-[2px] whitespace-nowrap ${off ? 'text-[#8d8b90]' : ''}`}>
      <span className={`flex h-3 w-3 items-center justify-center border bg-white ${off ? 'border-[#cdcbd0]' : 'border-[#4c4b50]'}`}>
        {on && <Icon className="h-2.5 w-2.5" box="0 0 10 10"><path d="M1 5l2.500 3L9 2" strokeWidth="1.200" /></Icon>}
      </span>
      {label}
    </div>
  );
}

function ToolButton({ className = '', children }: { className?: string; children: ReactNode }) {
  return (
    <div className={`flex h-5 w-[21px] items-center justify-center border ${className}`}>
      <Icon className="h-4 w-4">{children}</Icon>
    </div>
  );
}

function ImportDialog() {
  const formats = ['PNEZ (comma delimited)', 'PNEZD (space delimited)', 'XYZ_RGB (comma delimited)', 'PNEZD (comma delimited)'];
  return (
    <div className="absolute top-[84px] left-[454px] flex h-[548px] w-[373px] flex-col bg-[#f1eff2] text-[10.200px] leading-[14px] tracking-[-0.300px] text-[#2b2a2e] shadow-[0_1px_8px_rgba(0,0,0,0.45)]">
      <div className="flex h-7 items-center bg-white px-2.5 text-[11px] tracking-[-0.150px]">
        <Icon className="h-[11px] w-[11px]"><path d="M13 6V2.500H6L2.500 6v5L6 14h7v-3" stroke="#2888b9" strokeWidth="4" /><path d="M12 3H6L3 6v3" stroke="#86c5df" strokeWidth="1.500" /></Icon>
        <span className="ml-[5px]">Import Points</span>
        <Icon className="mr-[-2px] ml-auto h-[11px] w-[11px]" box="0 0 11 11"><path d="M1 1l9 9M10 1l-9 9" strokeWidth="1.100" /></Icon>
      </div>
      <div className="flex flex-col pl-[10.500px]">
        <span className="mt-[6px] h-[18px]">Selected Files:</span>
        <div className="flex">
          <div className="flex h-[85px] w-[320px] border border-[#929196] bg-white pt-[5px]">
            <span className="h-[20px] w-[157px] pl-[6px]">File Name</span>
            <span className="h-[20px] w-[158px] border-x border-[#ebe9ec] pl-[6px]">Status</span>
          </div>
          <div className="ml-[8.500px] flex flex-col gap-[6px]">
            <ToolButton className="border-2 border-[#2f75b5] bg-[#d3e2ee] text-[#4f4f52]">
              <path d="M6 2h4v4h4v4h-4v4H6v-4H2V6h4z" fill="#fafafa" />
            </ToolButton>
            <ToolButton className="border-[#d0ced1] bg-[#cfcdd0] text-[#a29fa2]">
              <path d="M4 2l4 4 4-4 2 2-4 4 4 4-2 2-4-4-4 4-2-2 4-4-4-4z" fill="#c4c2c4" strokeWidth="1.100" />
            </ToolButton>
          </div>
        </div>
        <span className="mt-[6px] h-[17px] tracking-[-0.150px]">Specify point file format (filtering OFF):</span>
        <div className="flex">
          <div className="flex h-[71px] w-[320px] border border-[#929196] bg-white">
            <div className="w-[284px] pt-[1px] tracking-[-0.450px]">
              {formats.map((format, i) => (
                <div key={format} className={`flex h-4 items-center pl-[6px] ${i === 3 ? 'bg-[#f2f0f3]' : ''}`}>
                  {format}
                </div>
              ))}
            </div>
            <div className="my-px mr-[2px] ml-auto flex w-[14px] flex-col items-center bg-[#f3f1f4] text-[#57565c]">
              <Chevron dir="up" className="mt-[4px]" />
              <div className="mt-[22px] h-[16px] w-full bg-[#cac8cc]" />
              <Chevron dir="down" className="mt-auto mb-[4px]" />
            </div>
          </div>
          <div className="mt-[-1px] ml-[8.500px] flex flex-col gap-[6px]">
            <ToolButton className="border-[#bbb9bc] bg-[#dfddde] text-[#55555a]">
              <path d="M8 1l2 4 5 3-5 2-2 5-2-5-5-2 5-3z" fill="#d0d0d2" strokeWidth="1" />
              <circle cx="8" cy="8" r="2.500" fill="#fff" strokeWidth="1" />
              <path d="M9 13l5-6 2 2-5 5-2 1z" fill="#ecce67" strokeWidth=".8" />
            </ToolButton>
            <ToolButton className="border-[#d0ced1] bg-[#cfcdd0] text-[#9b999d]">
              <path d="M2 2h11v12H2z" fill="#e5e3e6" strokeWidth="1" />
              <path d="M4 5h5M4 8h3M4 11h3" />
              <path d="M7 7h8l-3 4v4l-2-2v-2z" fill="#eee" strokeWidth="1" />
            </ToolButton>
          </div>
        </div>
        <span className="mt-[5px] h-[16px]">Preview:</span>
        <div className="h-[87px] w-[350px] border border-[#929196] bg-white" />
        <div className="relative mt-[14px] h-[47px] w-[348px] border border-[#e0dee2] pt-[16px] pl-2.5">
          <div className="absolute top-[-7px] left-[-1px] bg-[#f1eff2] pr-2">
            <Check label="Add Points to Point Group." />
          </div>
          <div className="flex">
            <div className="flex h-5 w-[298px] items-center justify-end bg-[#cbc9cc] pr-1 text-[#b4b2b6]">
              <Chevron dir="down" />
            </div>
            <ToolButton className="ml-[7px] border-[#cac8cb] bg-[#c9c7ca] text-[#939196]">
              <path d="M4 1H1v14h3M12 1h3v14h-3M8 3l4 5-4 5-4-5z" />
              <circle cx="8" cy="8" r="1.500" />
            </ToolButton>
          </div>
        </div>
        <div className="relative mt-3 h-[91px] w-[348px] border border-[#e0dee2] pt-4 pl-2.5">
          <span className="absolute top-[-7px] left-[7px] bg-[#f1eff2] pr-2 tracking-[-0.250px]">Advanced options</span>
          <div className="flex flex-col gap-3">
            <Check label="Do level adjustment if possible" />
            <Check on label="Do coordinate transformation if possible" />
            <Check off label="Do coordinate data expansion if possible" />
          </div>
        </div>
        <div className="mt-[16px] flex gap-[7px] pl-[120px] text-center leading-[17px]">
          <span className="h-[20px] w-[71px] bg-[#c4c2c6]">OK</span>
          <span className="h-[20px] w-[71px] border border-[#cac8cc] bg-[#e9e7ea]">Cancel</span>
          <span className="h-[20px] w-[71px] border border-[#cac8cc] bg-[#e9e7ea]">Help</span>
        </div>
      </div>
    </div>
  );
}

export default function App() {
  return (
    <main className="relative flex h-[720px] w-[1280px] flex-col overflow-hidden bg-[#161b1e] font-['Open_Sans','Noto_Sans',sans-serif]">
      <div className="h-5 shrink-0 border-b border-[#343a3b]" />
      <header className="flex h-[41px] shrink-0 bg-[#20272f]">
        <AppButton />
        <div className="w-[1242px]">
          <TitleBar />
          <RibbonTabs />
        </div>
      </header>
      <Ribbon />
      <FileTabs />
      <div className="h-[5px] shrink-0 bg-[#3b4251]" />
      <div className="flex h-[492px] shrink-0 bg-[#3b4251] pl-px">
        <Toolspace />
        <div className="mt-[-1px] flex">
          <PaletteTabs />
          <Canvas />
          <ToolStrip />
        </div>
      </div>
      <StatusBar />
      <ImportDialog />
      <svg viewBox="0 0 28 40" className="absolute top-[252px] left-[511px] h-[40px] w-[28px]" fill="#fff" stroke="#17171a" strokeWidth="2.400" strokeLinejoin="round">
        <path d="M2 2v30l6.500-6 6 12 5.500-2.500-6-11.500h9z" />
      </svg>
      <div className="absolute top-[592px] left-[364px] flex h-[45px] w-[552px] items-center justify-center rounded-[10px] bg-[rgba(8,9,10,0.6)] font-['Liberation_Sans',Arial,sans-serif] text-[33.750px] font-bold whitespace-nowrap text-white">
        select it then i'll import the points
      </div>
    </main>
  );
}
